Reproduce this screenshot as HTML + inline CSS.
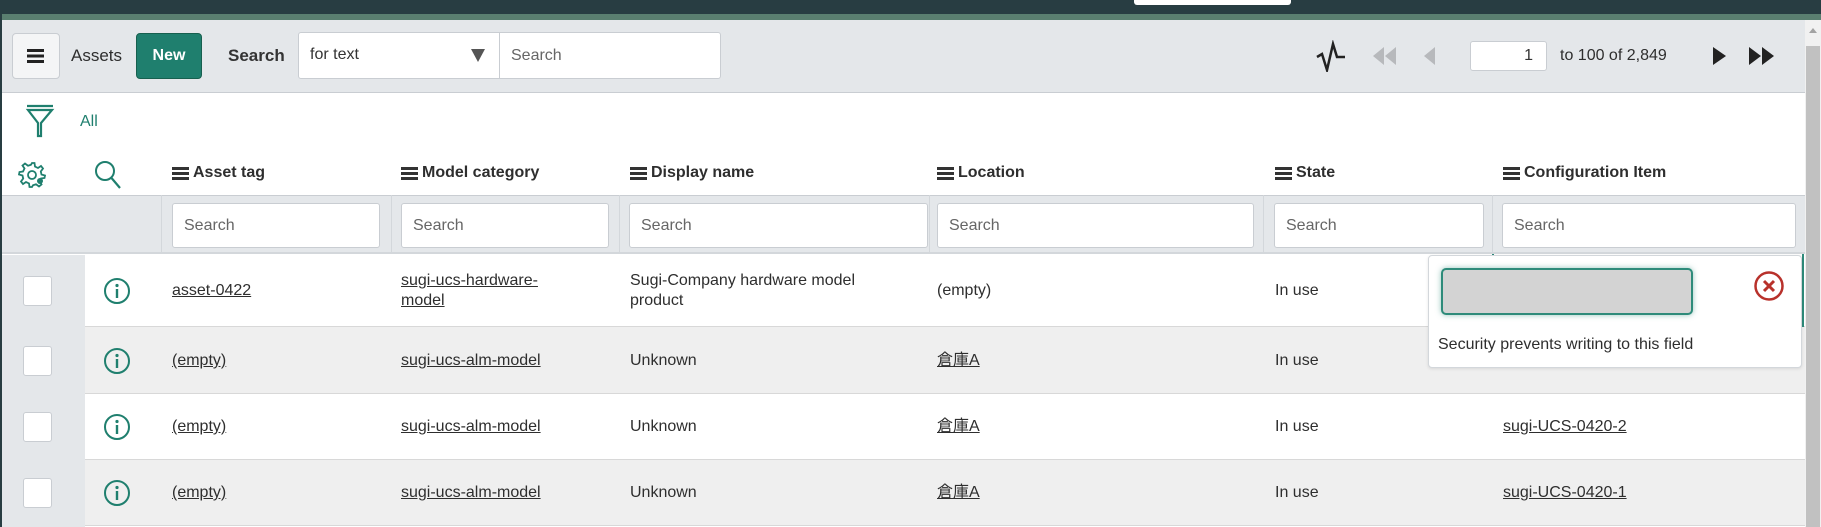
<!DOCTYPE html>
<html><head><meta charset="utf-8"><style>
*{box-sizing:border-box;margin:0;padding:0}
body{width:1821px;height:527px;overflow:hidden;position:relative;background:#fff;font-family:"Liberation Sans","Noto Sans CJK JP",sans-serif;font-size:16px;color:#2e2e2e}
.a{position:absolute}
.inp{position:absolute;background:#fff;border:1px solid #c9cdd2;border-radius:3px;color:#666;padding-left:11px;display:flex;align-items:center}
.hd{position:absolute;top:164px;font-weight:bold;display:flex;align-items:center;gap:4px;color:#2e2e2e}
.hm{display:inline-block;width:17px;height:13px;background:linear-gradient(#333 0 3px,transparent 3px 5px,#333 5px 8px,transparent 8px 10px,#333 10px 13px)}
.t{position:absolute;line-height:20px}
.u{text-decoration:underline}
.cb{position:absolute;left:23px;width:29px;height:30px;background:#fff;border:1px solid #c9cdd2;border-radius:3px}
.vl{position:absolute;top:195px;height:58px;width:1px;background:#d3d7db}
</style></head><body>
<div class="a" style="left:0;top:0;width:1821px;height:14px;background:#283d42"></div>
<div class="a" style="left:1134px;top:0;width:157px;height:5px;background:#fff;border-radius:0 0 3px 3px"></div>
<div class="a" style="left:0;top:14px;width:1821px;height:6px;background:#5a7f70"></div>
<div class="a" style="left:0;top:20px;width:1805px;height:73px;background:#e4e7ea;border-bottom:1px solid #c9cdd2"></div>
<div class="a" style="left:0;top:14px;width:2px;height:513px;background:#283d42"></div>
<div class="a" style="left:1805px;top:20px;width:16px;height:507px;background:#f1f1f1"></div>
<div class="a" style="left:1806px;top:46px;width:14px;height:481px;background:#c1c1c1"></div>
<div class="a" style="left:1809px;top:28px;width:0;height:0;border-left:4px solid transparent;border-right:4px solid transparent;border-bottom:5px solid #a3a3a3"></div>
<div class="a" style="left:12px;top:33px;width:48px;height:46px;background:#f4f5f6;border:1px solid #c9cdd2;border-radius:4px"></div>
<div class="a" style="left:27px;top:49px;width:17px;height:14px;background:linear-gradient(#222 0 3px,transparent 3px 5.5px,#222 5.5px 8.5px,transparent 8.5px 11px,#222 11px 14px)"></div>
<div class="t" style="left:71px;top:46px;font-size:17px">Assets</div>
<div class="a" style="left:136px;top:33px;width:66px;height:46px;background:#1f7f6e;border:1px solid #17604f;border-radius:4px;color:#fff;font-weight:bold;display:flex;align-items:center;justify-content:center;font-size:16px">New</div>
<div class="t" style="left:228px;top:46px;font-size:17px;font-weight:bold;color:#333">Search</div>
<div class="inp" style="left:298px;top:32px;width:202px;height:47px;border-radius:3px 0 0 3px;color:#333;align-items:flex-start;padding-top:13px">for text</div>
<div class="a" style="left:471px;top:49px;width:0;height:0;border-left:7px solid transparent;border-right:7px solid transparent;border-top:13px solid #555"></div>
<div class="inp" style="left:499px;top:32px;width:222px;height:47px;border-radius:0 3px 3px 0">Search</div>
<svg class="a" style="left:1315px;top:40px" width="34" height="32" viewBox="0 0 34 32"><path d="M2 17 L7 14 L12 30 L18 4 L22 17 L30 17" fill="none" stroke="#222" stroke-width="2.5"/></svg>
<svg class="a" style="left:1368px;top:45px" width="76" height="22"><path d="M0 11 L11 2 L11 20Z M12 11 L23 2 L23 20Z" fill="#b7b9bc" transform="translate(5,0)"/><path d="M56 11 L67 2 L67 20Z" fill="#b7b9bc"/></svg>
<div class="inp" style="left:1470px;top:41px;width:77px;height:30px;justify-content:flex-end;padding-right:13px;color:#333">1</div>
<div class="t" style="left:1560px;top:46px;font-size:16px">to 100 of 2,849</div>
<svg class="a" style="left:1711px;top:45px" width="76" height="22"><path d="M2 2 L15 11 L2 20Z" fill="#222"/><path d="M38 2 L50 11 L38 20Z M51 2 L63 11 L51 20Z" fill="#222"/></svg>
<svg class="a" style="left:25px;top:104px" width="30" height="34" viewBox="0 0 30 34"><path d="M2 2 H28 M3 6 H27 L16 19 V32 H13 V19 Z" fill="none" stroke="#1f7f6e" stroke-width="2.2"/></svg>
<div class="t" style="left:80px;top:112px;color:#1f7f6e;font-size:16px">All</div>
<svg class="a" style="left:18px;top:160px" width="28" height="28" viewBox="0 0 28 28"><path d="M14 3 L16.5 3 L17 6.5 L20 8 L23 6 L25 8.5 L22.8 11.5 L23.5 14.5 L27 15.5 L26.5 18 L23 18.5 L21.5 21.5 L23.5 24.5 L21 26.5 L18 24.3 L15 25.3 L14 27 L11.5 27 L11 23.5 L8 22 L5 24 L3 21.5 L5.2 18.5 L4.5 15.5 L1 14.5 L1.5 12 L5 11.5 L6.5 8.5 L4.5 5.5 L7 3.5 L10 5.7 L13 4.7 Z" fill="none" stroke="#1f7f6e" stroke-width="1.8"/><circle cx="14" cy="15" r="4" fill="none" stroke="#1f7f6e" stroke-width="1.8"/><circle cx="22" cy="21" r="3" fill="#1f7f6e"/></svg>
<svg class="a" style="left:93px;top:159px" width="32" height="32" viewBox="0 0 32 32"><circle cx="12" cy="12" r="9" fill="none" stroke="#1f7f6e" stroke-width="2"/><path d="M18.5 19 L27 29" stroke="#1f7f6e" stroke-width="2.2"/></svg>
<div class="hd" style="left:172px"><span class="hm"></span>Asset tag</div>
<div class="hd" style="left:401px"><span class="hm"></span>Model category</div>
<div class="hd" style="left:630px"><span class="hm"></span>Display name</div>
<div class="hd" style="left:937px"><span class="hm"></span>Location</div>
<div class="hd" style="left:1275px"><span class="hm"></span>State</div>
<div class="hd" style="left:1503px"><span class="hm"></span>Configuration Item</div>
<div class="a" style="left:2px;top:195px;width:1803px;height:59px;background:#e4e7ea;border-top:1px solid #c9cdd2;border-bottom:2px solid #d3d7db"></div>
<div class="vl" style="left:161px"></div><div class="vl" style="left:391px"></div><div class="vl" style="left:619px"></div><div class="vl" style="left:929px"></div><div class="vl" style="left:1263px"></div><div class="vl" style="left:1492px"></div>
<div class="inp" style="left:172px;top:203px;width:208px;height:45px">Search</div>
<div class="inp" style="left:401px;top:203px;width:208px;height:45px">Search</div>
<div class="inp" style="left:629px;top:203px;width:299px;height:45px">Search</div>
<div class="inp" style="left:937px;top:203px;width:317px;height:45px">Search</div>
<div class="inp" style="left:1274px;top:203px;width:210px;height:45px">Search</div>
<div class="inp" style="left:1502px;top:203px;width:294px;height:45px">Search</div>
<div class="a" style="left:2px;top:255px;width:1803px;height:72px;background:#fff;border-bottom:1px solid #d8d8d8"></div>
<div class="a" style="left:2px;top:327px;width:1803px;height:67px;background:#efefef;border-bottom:1px solid #d8d8d8"></div>
<div class="a" style="left:2px;top:394px;width:1803px;height:66px;background:#fff;border-bottom:1px solid #d8d8d8"></div>
<div class="a" style="left:2px;top:460px;width:1803px;height:66px;background:#efefef;border-bottom:1px solid #d8d8d8"></div>
<div class="a" style="left:2px;top:255px;width:83px;height:272px;background:#e4e7ea"></div>
<div class="cb" style="top:276px"></div><div class="cb" style="top:346px"></div><div class="cb" style="top:412px"></div><div class="cb" style="top:478px"></div>
<svg class="a" style="left:103px;top:277px" width="28" height="240" viewBox="0 0 28 240"><g fill="none" stroke="#1f7f6e" stroke-width="2"><circle cx="14" cy="14" r="12"/><circle cx="14" cy="84" r="12"/><circle cx="14" cy="150" r="12"/><circle cx="14" cy="216" r="12"/></g><g fill="#1f7f6e"><circle cx="14" cy="8.5" r="1.6"/><rect x="12.8" y="12" width="2.4" height="9"/><circle cx="14" cy="78.5" r="1.6"/><rect x="12.8" y="82" width="2.4" height="9"/><circle cx="14" cy="144.5" r="1.6"/><rect x="12.8" y="148" width="2.4" height="9"/><circle cx="14" cy="210.5" r="1.6"/><rect x="12.8" y="214" width="2.4" height="9"/></g></svg>
<div class="t u" style="left:172px;top:281px">asset-0422</div>
<div class="t u" style="left:401px;top:271px">sugi-ucs-hardware-<br>model</div>
<div class="t" style="left:630px;top:271px">Sugi-Company hardware model<br>product</div>
<div class="t" style="left:937px;top:281px">(empty)</div>
<div class="t" style="left:1275px;top:281px">In use</div>
<div class="t u" style="left:172px;top:351px">(empty)</div>
<div class="t u" style="left:401px;top:351px">sugi-ucs-alm-model</div>
<div class="t" style="left:630px;top:351px">Unknown</div>
<div class="t u" style="left:937px;top:351px">倉庫A</div>
<div class="t" style="left:1275px;top:351px">In use</div>
<div class="t u" style="left:172px;top:417px">(empty)</div>
<div class="t u" style="left:401px;top:417px">sugi-ucs-alm-model</div>
<div class="t" style="left:630px;top:417px">Unknown</div>
<div class="t u" style="left:937px;top:417px">倉庫A</div>
<div class="t" style="left:1275px;top:417px">In use</div>
<div class="t u" style="left:1503px;top:417px">sugi-UCS-0420-2</div>
<div class="t u" style="left:172px;top:483px">(empty)</div>
<div class="t u" style="left:401px;top:483px">sugi-ucs-alm-model</div>
<div class="t" style="left:630px;top:483px">Unknown</div>
<div class="t u" style="left:937px;top:483px">倉庫A</div>
<div class="t" style="left:1275px;top:483px">In use</div>
<div class="t u" style="left:1503px;top:483px">sugi-UCS-0420-1</div>
<div class="a" style="left:1492px;top:254px;width:312px;height:73px;border:2px solid #2e8b7a;border-top:none"></div>
<div class="a" style="left:1428px;top:255px;width:374px;height:113px;background:#fff;border:1px solid #d3d7db;border-radius:4px;box-shadow:0 1px 3px rgba(0,0,0,.1)"></div>
<div class="a" style="left:1441px;top:268px;width:252px;height:47px;background:#d3d3d3;border:2px solid #2e8b7a;border-radius:5px;box-shadow:0 0 6px rgba(46,139,122,.5)"></div>
<svg class="a" style="left:1753px;top:270px" width="32" height="32" viewBox="0 0 32 32"><circle cx="16" cy="16" r="13.5" fill="none" stroke="#b8312b" stroke-width="2.5"/><path d="M11 11 L21 21 M21 11 L11 21" stroke="#b8312b" stroke-width="3"/></svg>
<div class="t" style="left:1438px;top:335px">Security prevents writing to this field</div>
</body></html>
